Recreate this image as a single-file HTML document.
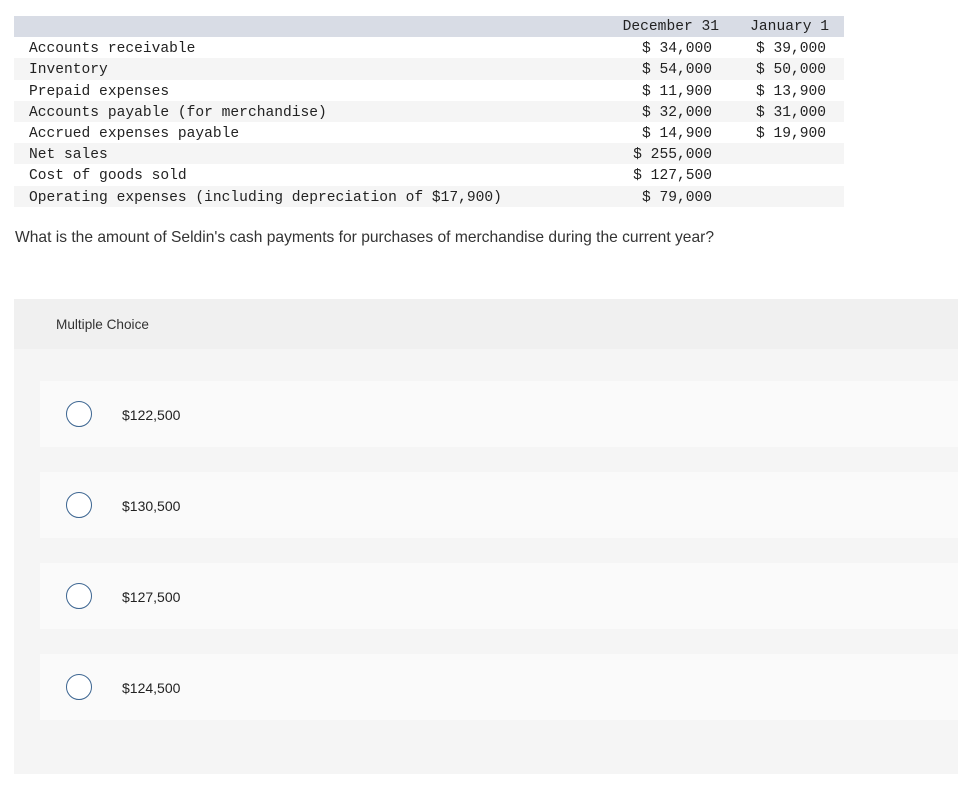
<!DOCTYPE html>
<html><head><style>
body{margin:0;background:#fff;width:958px;height:807px;position:relative;font-family:"Liberation Sans",sans-serif;overflow:hidden}
.t{position:absolute;left:14px;top:16px;width:830px;font-family:"Liberation Mono",monospace;font-size:14.6px;color:#222}
.r{height:21.2px;line-height:24px;position:relative;white-space:pre}
.r:nth-child(odd){background:#f5f5f5}
.r.h{background:#d8dce5;line-height:23px}
.r:nth-child(2),.r:nth-child(4),.r:nth-child(6),.r:nth-child(8){background:#fff}
.l{position:absolute;left:15px}
.d{position:absolute;right:132px}
.j{position:absolute;right:18px}
.q{position:absolute;left:15px;top:229px;font-size:15.6px;color:#333}
.mc{position:absolute;left:14px;top:299px;width:944px;height:475px;background:#f5f5f5}
.mch{height:50px;background:#f0f0f0;font-size:13.6px;color:#333;line-height:51px;padding-left:42px}
.o{position:absolute;left:26px;width:918px;height:66px;background:#fafafa}
.c{position:absolute;left:26px;top:20px;width:24px;height:24px;border:1.5px solid #3c6591;border-radius:50%;background:#fff}
.ot{position:absolute;left:82px;top:1px;line-height:66px;font-size:14px;color:#222}
</style></head><body>
<div class="t">
<div class="r h"><span class="d" style="right:125px">December 31</span><span class="j" style="right:15px">January 1</span></div>
<div class="r"><span class="l">Accounts receivable</span><span class="d">$ 34,000</span><span class="j">$ 39,000</span></div>
<div class="r"><span class="l">Inventory</span><span class="d">$ 54,000</span><span class="j">$ 50,000</span></div>
<div class="r"><span class="l">Prepaid expenses</span><span class="d">$ 11,900</span><span class="j">$ 13,900</span></div>
<div class="r"><span class="l">Accounts payable (for merchandise)</span><span class="d">$ 32,000</span><span class="j">$ 31,000</span></div>
<div class="r"><span class="l">Accrued expenses payable</span><span class="d">$ 14,900</span><span class="j">$ 19,900</span></div>
<div class="r"><span class="l">Net sales</span><span class="d">$ 255,000</span></div>
<div class="r"><span class="l">Cost of goods sold</span><span class="d">$ 127,500</span></div>
<div class="r"><span class="l">Operating expenses (including depreciation of $17,900)</span><span class="d">$ 79,000</span></div>
</div>
<div class="q">What is the amount of Seldin's cash payments for purchases of merchandise during the current year?</div>
<div class="mc">
<div class="mch">Multiple Choice</div>
<div class="o" style="top:82px"><div class="c"></div><div class="ot">$122,500</div></div>
<div class="o" style="top:173px"><div class="c"></div><div class="ot">$130,500</div></div>
<div class="o" style="top:264px"><div class="c"></div><div class="ot">$127,500</div></div>
<div class="o" style="top:355px"><div class="c"></div><div class="ot">$124,500</div></div>
</div>
</body></html>
